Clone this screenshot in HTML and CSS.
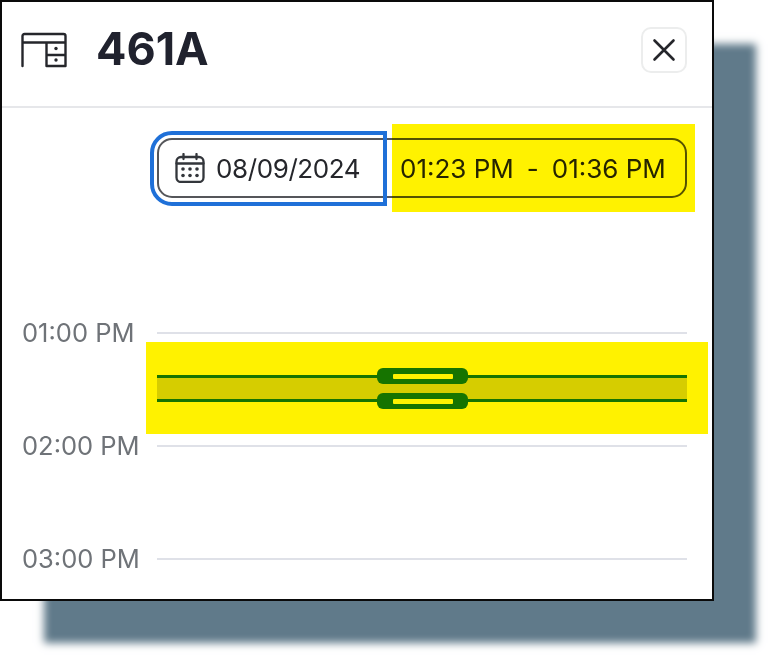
FILE: index.html
```html
<!DOCTYPE html>
<html lang="en">
<head>
<meta charset="utf-8">
<title>461A</title>
<link rel="stylesheet" href="styles.css">
</head>
<body>
<section class="card">
  <header class="head">
    <svg class="desk" width="46" height="36" viewBox="0 0 46 36" fill="none" stroke="#25262b" stroke-width="2.4" stroke-linecap="round" stroke-linejoin="round">
      <path d="M1.500 34V4a2 2 0 0 1 2-2h39a2 2 0 0 1 2 2v30H25.500V10.500M1.500 10.500h43M25.500 23h19"/>
      <circle cx="35" cy="16.500" r="1.700" fill="#25262b" stroke="none"/>
      <circle cx="35" cy="28" r="1.700" fill="#25262b" stroke="none"/>
    </svg>
    <h1 class="title">461A</h1>
    <button class="close" type="button" aria-label="Close">
      <svg width="24" height="24" viewBox="0 0 24 24" fill="none" stroke="#25262b" stroke-width="2.600" stroke-linecap="round"><path d="M2.500 2.500l19 19M21.500 2.500l-19 19"/></svg>
    </button>
  </header>
  <div class="body">
    <div class="picker">
      <div class="date">
        <svg class="cal" width="30" height="30" viewBox="0 0 30 30" fill="none" stroke="#33363b" stroke-width="2.300" stroke-linecap="round">
          <rect x="1.500" y="4" width="27" height="25" rx="4.500"/>
          <path d="M1.500 10.500h27M8.500 1v5M21.500 1v5"/>
          <g fill="#33363b" stroke="none">
            <circle cx="8" cy="16" r="1.800"/><circle cx="15" cy="16" r="1.800"/><circle cx="22" cy="16" r="1.800"/>
            <circle cx="8" cy="22.500" r="1.800"/><circle cx="15" cy="22.500" r="1.800"/><circle cx="22" cy="22.500" r="1.800"/>
          </g>
        </svg>
        <span class="date-text">08/09/2024</span>
      </div>
      <div class="times">
        <span>01:23 PM</span><span class="dash">-</span><span>01:36 PM</span>
      </div>
      <div class="focus"></div>
    </div>
    <div class="grid">
      <div class="row"><span class="hour">01:00 PM</span><i class="rule"></i></div>
      <div class="row"><span class="hour">02:00 PM</span><i class="rule"></i></div>
      <div class="row"><span class="hour">03:00 PM</span><i class="rule"></i></div>
      <div class="band">
        <div class="handle top"><i></i></div>
        <div class="handle bottom"><i></i></div>
      </div>
    </div>
  </div>
  <div class="mark mark-time"></div>
  <div class="mark mark-band"></div>
</section>
</body>
</html>
```

FILE: styles.css
```css
* { box-sizing: border-box; }

html, body {
  margin: 0;
  background: #fff;
}

body {
  width: 768px;
  height: 656px;
  overflow: hidden;
  font-family: Inter, "Liberation Sans", sans-serif;
}

.card {
  position: relative;
  width: 714px;
  height: 601px;
  background: #fff;
  border: 2px solid #0a0a0a;
  box-shadow: 43px 43px 8px -1px #607a8a;
  overflow: hidden;
}

.head {
  display: flex;
  align-items: center;
  height: 106px;
  padding: 0 25px 8px 19px;
  border-bottom: 2px solid #e6e7ea;
}

.desk { flex: none; }

.title {
  margin: 0 0 3px 29px;
  flex: 1;
  font-size: 45px;
  font-weight: 700;
  color: #20222e;
}

.close {
  display: flex;
  align-items: center;
  justify-content: center;
  width: 46px;
  height: 46px;
  padding: 0;
  background: #fff;
  border: 2px solid #eceded;
  border-radius: 10px;
}

.body {
  padding: 30px 25px 0 155px;
}

.picker {
  position: relative;
  display: flex;
  align-items: center;
  height: 60px;
  border: 2px solid #55565a;
  border-radius: 15px;
  color: #25262b;
  font-size: 26px;
}

.date {
  display: flex;
  align-items: center;
  gap: 11px;
  width: 233px;
  padding-left: 16px;
}

.date-text { letter-spacing: -0.4px; }

.cal { flex: none; }

.times {
  display: flex;
  gap: 13px;
  padding-left: 8px;
}

.focus {
  position: absolute;
  left: -9px;
  top: -9px;
  width: 237px;
  height: 75px;
  border: 4px solid #1f70d8;
  border-radius: 22px 0 0 22px;
}

.grid {
  position: relative;
  margin: 78px 0 0 -155px;
}

.row {
  display: flex;
  align-items: center;
  height: 113px;
}

.hour {
  width: 155px;
  padding: 1px 0 0 20px;
  font-size: 25.500px;
  line-height: 30px;
  color: #6f7378;
}

.rule {
  flex: 1;
  height: 2px;
  background: #dfe1e8;
}

.band {
  position: absolute;
  left: 155px;
  right: 0;
  top: 99px;
  height: 27px;
  background: #d6d8d8;
  border-top: 3px solid #167a10;
  border-bottom: 3px solid #167a10;
}

.handle {
  position: absolute;
  left: 220px;
  display: flex;
  align-items: center;
  justify-content: center;
  width: 91px;
  height: 16px;
  background: #167a10;
  border-radius: 6px;
}

.handle i {
  width: 60px;
  height: 5px;
  background: #fff;
  border-radius: 1px;
}

.handle.top { top: -10px; }
.handle.bottom { top: 15px; }

.mark {
  position: absolute;
  background: #fff200;
  mix-blend-mode: multiply;
}

.mark-time {
  left: 390px;
  top: 122px;
  width: 303px;
  height: 88px;
}

.mark-band {
  left: 144px;
  top: 340px;
  width: 562px;
  height: 92px;
}
```
